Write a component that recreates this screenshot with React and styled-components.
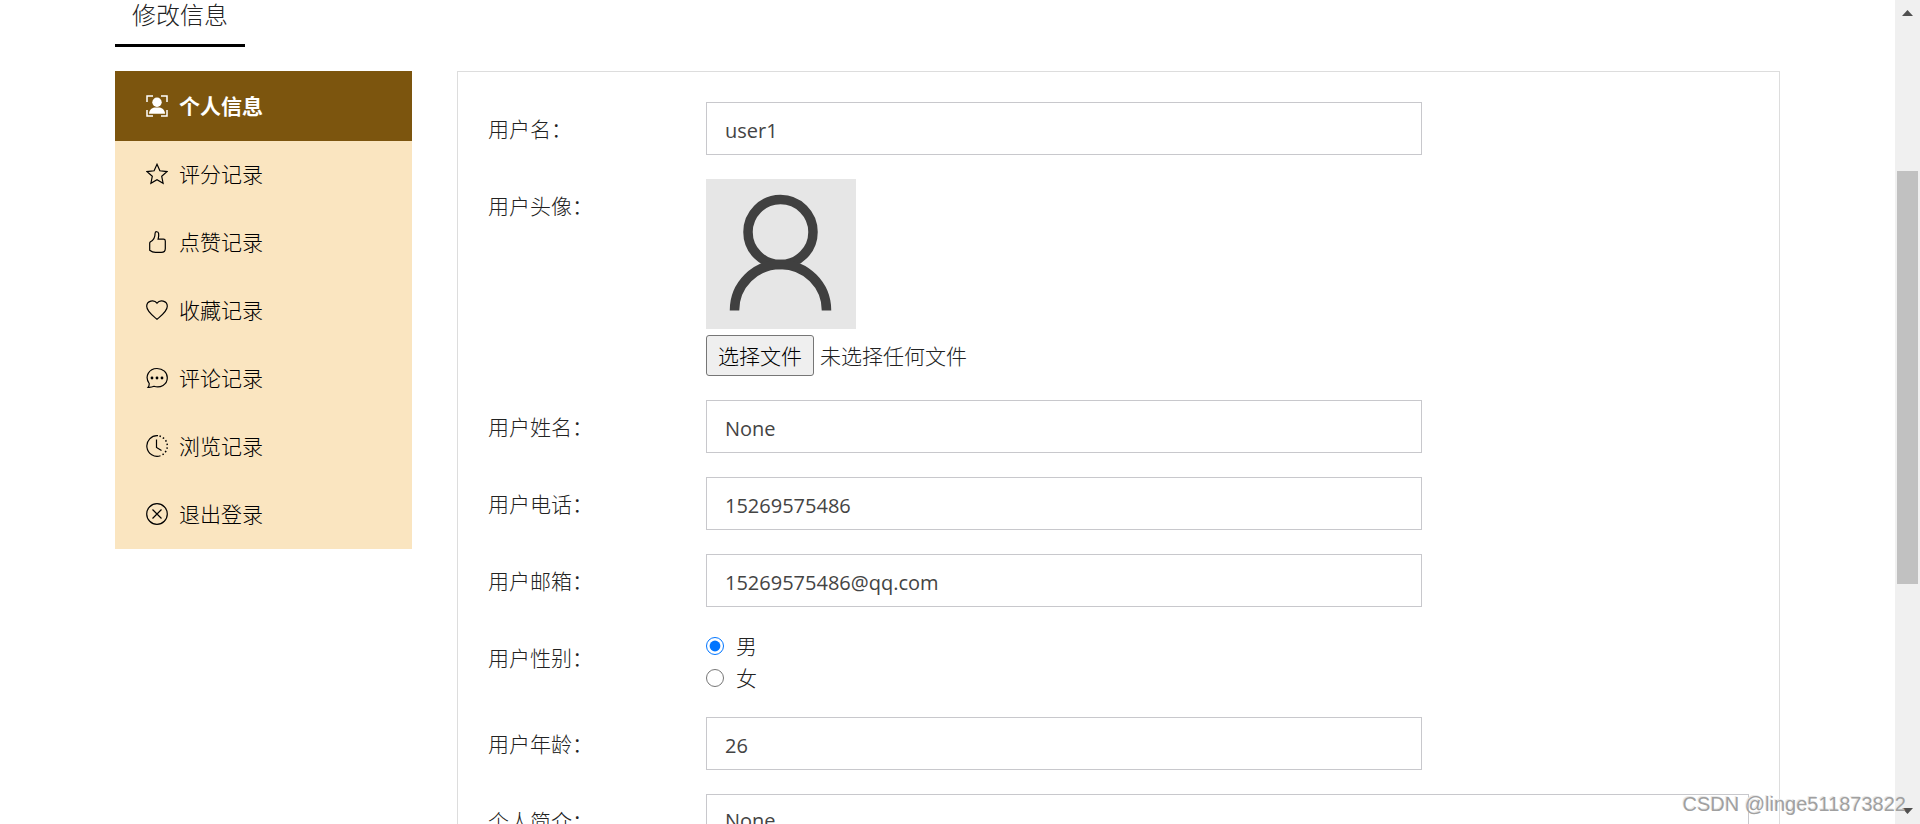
import React from "react";
import styled, { createGlobalStyle, css } from "styled-components";

const menu = [
  { icon: "profile", text: "个人信息", active: true },
  { icon: "star", text: "评分记录" },
  { icon: "like", text: "点赞记录" },
  { icon: "heart", text: "收藏记录" },
  { icon: "comment", text: "评论记录" },
  { icon: "clock", text: "浏览记录" },
  { icon: "close", text: "退出登录" }
];

const icons = {
  profile: (
    <>
      <path d="M1 7V1h6M15 1h6v6M21 15v6h-6M7 21H1v-6" strokeWidth="1.5" />
      <g fill="currentColor" stroke="none">
        <circle cx="11" cy="7.2" r="4.7" />
        <path d="M3 18.800c0-3.600 2.500-5.600 5.500-6.300h5c3 .7 5.500 2.700 5.500 6.300z" />
      </g>
    </>
  ),
  star: (
    <path d="M11 1.3l2.9 6.5 7 .8-5.200 4.700 1.400 6.900-6.100-3.500-6.100 3.500 1.400-6.900-5.200-4.700 7-.8z" />
  ),
  like: (
    <path d="M4.500 10.800c2.700-1.500 4.600-4.800 4.600-8.600.1-2 3-2 3.500.2.400 2.200-.2 4.200-.5 5.800h5.400c1.300 0 1.800.8 1.800 1.800v7.500c0 2.500-1.500 3.900-4 3.900H9.500c-2.200 0-4-.7-5.800-2.200V12.300c0-.7.200-1.100.8-1.500z" />
  ),
  heart: (
    <path d="M11 20.300C7 16.800.7 12.500.7 7.300.7 1.500 8.200.2 11 4.200c2.800-4 10.300-2.700 10.300 3.100 0 5.200-6.300 9.500-10.300 13z" />
  ),
  comment: (
    <>
      <path d="M3.200 16.500C-1.800 9.500 3 1.500 11 1.500c6 0 10.300 4 10.300 9.300 0 7-7 10.500-13.300 8.500-1.700.8-3.500 1.200-6 1 .9-1 1.300-2 1.200-3.800z" />
      <g fill="currentColor" stroke="none">
        <circle cx="6" cy="11" r="1.4" />
        <circle cx="11" cy="11" r="1.4" />
        <circle cx="16" cy="11" r="1.4" />
      </g>
    </>
  ),
  clock: (
    <>
      <path d="M12 .7A10.300 10.300 0 1 0 14.500 20.700" />
      <path
        d="M13.500 1A10.300 10.300 0 0 1 16 20"
        strokeWidth="1.5"
        strokeDasharray="1.500 2.200"
      />
      <path d="M10.500 4.500v8l5 3" />
    </>
  ),
  close: (
    <>
      <circle cx="11" cy="11" r="10.3" />
      <path d="M6.500 6.500l9 9M15.500 6.500l-9 9" />
    </>
  )
};

function Icon({ name }) {
  return (
    <IconContent viewBox="0 0 22 22" aria-hidden="true">
      {icons[name]}
    </IconContent>
  );
}

function TextField({ id, label, value, type = "text" }) {
  return (
    <Row>
      <Label htmlFor={id}>{label}</Label>
      <Input id={id} type={type} defaultValue={value} />
    </Row>
  );
}

function Avatar() {
  return (
    <AvatarContent viewBox="0 0 150 150" role="img" aria-label="用户头像">
      <circle cx="74.5" cy="53" r="32.5" />
      <path d="M28.500 131.500a46 46 0 0 1 92 0" />
    </AvatarContent>
  );
}

function Scrollbar() {
  return (
    <ScrollTrack aria-hidden="true">
      <ScrollArrow viewBox="0 0 25 25">
        <path d="M7 16h11l-5.500-6z" />
      </ScrollArrow>
      <ScrollSpace $grow={146} />
      <ScrollThumb />
      <ScrollSpace $grow={215} />
      <ScrollArrow viewBox="0 0 25 25">
        <path d="M7 9h11l-5.500 6z" />
      </ScrollArrow>
    </ScrollTrack>
  );
}

export default function App() {
  return (
    <Screen>
      <GlobalStyle />
      <Page>
        <Container>
          <Title>修改信息</Title>
          <Columns>
            <Menu>
              {menu.map(item => (
                <MenuItem key={item.text} href="#" $active={item.active}>
                  <Icon name={item.icon} />
                  {item.text}
                </MenuItem>
              ))}
            </Menu>
            <Form>
              <TextField id="username" label="用户名：" value="user1" />
              <Row>
                <Label htmlFor="avatar">用户头像：</Label>
                <Upload>
                  <Avatar />
                  <FileLine>
                    <FileInput id="avatar" type="file" />
                    <FileButton htmlFor="avatar">选择文件</FileButton>
                    未选择任何文件
                  </FileLine>
                </Upload>
              </Row>
              <TextField id="name" label="用户姓名：" value="None" />
              <TextField id="phone" label="用户电话：" value="15269575486" />
              <TextField
                id="email"
                label="用户邮箱："
                value="15269575486@qq.com"
              />
              <Row role="radiogroup" aria-labelledby="gender">
                <Label as="span" id="gender">
                  用户性别：
                </Label>
                <Options>
                  <Option>
                    <Radio name="gender" defaultChecked />男
                  </Option>
                  <Option>
                    <Radio name="gender" />女
                  </Option>
                </Options>
              </Row>
              <TextField id="age" label="用户年龄：" value="26" />
              <Row>
                <Label htmlFor="intro">个人简介：</Label>
                <TextArea id="intro" defaultValue="None" />
              </Row>
            </Form>
          </Columns>
        </Container>
      </Page>
      <Scrollbar />
      <Watermark>CSDN @linge511873822</Watermark>
    </Screen>
  );
}

const GlobalStyle = createGlobalStyle`
  * {
    box-sizing: border-box;
  }

  body {
    margin: 0;
    background: #ffffff;
    color: #222222;
    font-family: "Open Sans", "Noto Sans CJK SC", sans-serif;
    font-size: 21px;
    font-weight: 300;
    line-height: 30px;
  }
`;

const Screen = styled.div`
  position: relative;
  display: flex;
  height: 100vh;
  overflow: hidden;
`;

const Page = styled.main`
  flex: 1;
  min-width: 0;
  overflow: hidden;
`;

const Container = styled.div`
  width: 88%;
  max-width: 1665px;
  margin: 0 auto;
`;

const Title = styled.h1`
  width: fit-content;
  margin: 0 0 24px;
  padding: 0 17px 14px;
  border-bottom: 3px solid #000000;
  font-size: 24px;
  font-weight: 300;
`;

const Columns = styled.div`
  display: flex;
  align-items: flex-start;
  gap: 45px;
`;

const Menu = styled.nav`
  flex: 0 0 297px;
  background: #fae5c0;
`;

const MenuItem = styled.a`
  display: flex;
  align-items: center;
  gap: 11px;
  height: 68px;
  padding: 0 31px 2px;
  color: #000000;
  text-decoration: none;

  ${props =>
    props.$active &&
    css`
      height: 70px;
      padding-bottom: 0;
      color: #ffffff;
      background: #7c550e;
      font-weight: bold;
    `}
`;

const IconContent = styled.svg`
  width: 22px;
  height: 22px;
  fill: none;
  stroke: currentColor;
  stroke-width: 1.2;
`;

const Form = styled.form`
  flex: 1;
  min-width: 0;
  display: flex;
  flex-direction: column;
  gap: 24px;
  padding: 30px;
  border: 1px solid #dddddd;
`;

const Row = styled.div`
  display: flex;
  align-items: flex-start;
`;

const Label = styled.label`
  flex: 0 0 218px;
  padding-top: 12px;
`;

const field = css`
  padding: 3px 18px 0;
  border: 1px solid #c8c8cc;
  border-radius: 0;
  background: #ffffff;
  color: #444444;
  font-family: inherit;
  font-size: 20px;
  font-weight: 400;
`;

const Input = styled.input`
  ${field}
  flex: 0 1 716px;
  min-width: 0;
  height: 53px;
`;

const TextArea = styled.textarea`
  ${field}
  flex: 1;
  height: 160px;
  padding-top: 11px;
  line-height: 30px;
  resize: none;
`;

const Upload = styled.div`
  display: flex;
  flex-direction: column;
  gap: 6px;
`;

const AvatarContent = styled.svg`
  width: 150px;
  height: 150px;
  background: #e6e6e6;
  fill: none;
  stroke: #404040;
  stroke-width: 9.5;
`;

const FileLine = styled.div`
  position: relative;
  display: flex;
  align-items: center;
  gap: 6px;
`;

const FileInput = styled.input`
  position: absolute;
  width: 108px;
  height: 41px;
  margin: 0;
  opacity: 0;
`;

const FileButton = styled.label`
  padding: 5px 11px 4px;
  border: 1px solid #767676;
  border-radius: 3px;
  background: #efefef;
  color: #000000;
`;

const Options = styled.div`
  display: flex;
  flex-direction: column;
  gap: 2px;
`;

const Option = styled.label`
  display: flex;
  align-items: center;
  gap: 12px;
`;

const Radio = styled.input.attrs({ type: "radio" })`
  width: 18px;
  height: 18px;
  margin: 0;
  accent-color: #0075ff;
`;

const ScrollTrack = styled.div`
  flex: 0 0 25px;
  display: flex;
  flex-direction: column;
  background: #f0f0f0;
`;

const ScrollArrow = styled.svg`
  flex: none;
  width: 25px;
  height: 25px;
  fill: #505050;
`;

const ScrollSpace = styled.div`
  flex: ${props => props.$grow} 0 0;
`;

const ScrollThumb = styled.div`
  flex: 413 0 0;
  margin: 0 2px;
  background: #c1c1c1;
`;

const Watermark = styled.span`
  position: absolute;
  right: 14px;
  bottom: 5px;
  color: #a0a0a0;
  font-family: "Liberation Sans", sans-serif;
  font-size: 20px;
  font-weight: 400;
  text-shadow: -1px -1px 0 #e8e8e8;
`;
